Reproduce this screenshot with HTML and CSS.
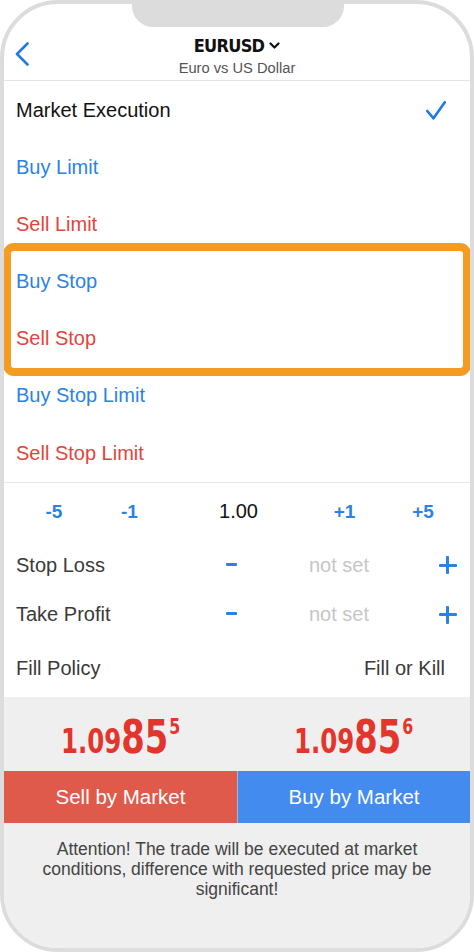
FILE: index.html
```html
<!DOCTYPE html>
<html lang="en">
<head>
<meta charset="utf-8">
<title>EURUSD order</title>
<link rel="stylesheet" href="styles.css">
</head>
<body>
<div class="phone">
  <div class="notch"></div>
  <header class="nav">
    <svg class="back" width="14" height="24" viewBox="0 0 14 24"><path d="M12.5 1.5 L2 12 L12.5 22.5" fill="none" stroke="#1f7ae6" stroke-width="2.6" stroke-linecap="round" stroke-linejoin="round"/></svg>
    <div class="heading">
      <div class="title">EURUSD<svg class="caret" width="11" height="8" viewBox="0 0 11 8"><path d="M1.5 1.5 L5.5 5.5 L9.5 1.5" fill="none" stroke="#111" stroke-width="2.2" stroke-linecap="round" stroke-linejoin="round"/></svg></div>
      <div class="subtitle">Euro vs US Dollar</div>
    </div>
  </header>

  <div class="types">
    <div class="type">Market Execution<svg class="check" width="20" height="19" viewBox="0 0 20 19"><path d="M1.3 10 L7.5 17.3 L18.8 1.3" fill="none" stroke="#1f7ae6" stroke-width="2.6" stroke-linecap="round" stroke-linejoin="round"/></svg></div>
    <div class="type buy">Buy Limit</div>
    <div class="type sell">Sell Limit</div>
    <div class="stops">
      <div class="type buy">Buy Stop</div>
      <div class="type sell">Sell Stop</div>
    </div>
    <div class="type buy">Buy Stop Limit</div>
    <div class="type sell">Sell Stop Limit</div>
  </div>

  <div class="params">
    <div class="volume">
      <span class="step">-5</span>
      <span class="step">-1</span>
      <span class="lots">1.00</span>
      <span class="step">+1</span>
      <span class="step step-last">+5</span>
    </div>
    <div class="param param-sl">
      <span class="label">Stop Loss</span>
      <span class="minus"></span>
      <span class="value">not set</span>
      <span class="plus"></span>
    </div>
    <div class="param">
      <span class="label">Take Profit</span>
      <span class="minus"></span>
      <span class="value">not set</span>
      <span class="plus"></span>
    </div>
    <div class="policy">
      <span class="label">Fill Policy</span>
      <span class="label">Fill or Kill</span>
    </div>
  </div>

  <div class="market">
    <div class="prices">
      <div class="price"><span class="quote"><span class="small">1.09</span><span class="big">85</span><sup class="pip">5</sup></span></div>
      <div class="price"><span class="quote"><span class="small">1.09</span><span class="big">85</span><sup class="pip">6</sup></span></div>
    </div>
    <div class="actions">
      <button class="btn btn-sell">Sell by Market</button>
      <button class="btn btn-buy">Buy by Market</button>
    </div>
    <p class="note">Attention! The trade will be executed at market conditions, difference with requested price may be significant!</p>
  </div>
</div>
</body>
</html>
```
FILE: styles.css
```css
html, body {
  margin: 0;
  padding: 0;
  background: #ffffff;
}

body {
  font-family: "Liberation Sans", Arial, sans-serif;
}

.phone {
  position: relative;
  width: 474px;
  height: 952px;
  box-sizing: border-box;
  border: 4px solid #dcdcdc;
  border-radius: 58px;
  overflow: hidden;
  background: #ffffff;
  display: flex;
  flex-direction: column;
}

.notch {
  position: absolute;
  top: -4px;
  left: 128px;
  width: 212px;
  height: 27px;
  background: #dcdcdc;
  border-radius: 0 0 21px 21px;
  z-index: 2;
}

/* header */
.nav {
  height: 76px;
  flex: none;
  border-bottom: 1px solid #e4e4e4;
  display: grid;
  grid-template-columns: 1fr auto 1fr;
  align-items: start;
}

.back {
  margin: 38px 0 0 11px;
}

.heading {
  padding-top: 31px;
  text-align: center;
}

.title {
  font-family: "Liberation Sans Narrow", "DejaVu Sans Condensed", sans-serif;
  font-weight: 700;
  font-size: 18px;
  letter-spacing: -0.7px;
  line-height: 22px;
  color: #111;
  display: flex;
  align-items: center;
  justify-content: center;
  gap: 5px;
}

.caret {
  margin-top: -1px;
}

.subtitle {
  margin-top: 3px;
  font-size: 14.7px;
  line-height: 17px;
  color: #555;
}

/* order types */
.types {
  flex: none;
  padding-top: 0.5px;
  border-bottom: 1px solid #e6e6e6;
}

.type {
  height: 57.17px;
  display: flex;
  align-items: center;
  justify-content: space-between;
  padding: 0 24px 0 12px;
  font-size: 20px;
  color: #111;
}

.type.buy { color: #2a83e4; }
.type.sell { color: #e2453b; }

.stops {
  position: relative;
}

.stops::after {
  content: "";
  position: absolute;
  top: -10px;
  bottom: -9px;
  left: -1px;
  right: -1px;
  border: 8px solid #f49b22;
  border-radius: 11px;
  pointer-events: none;
}

/* parameters */
.params {
  flex: none;
}

.volume {
  height: 58px;
  display: grid;
  grid-template-columns: 100px 51px 167px 45px 1fr;
  align-items: center;
  text-align: center;
}

.step {
  font-size: 19px;
  font-weight: 700;
  color: #2a83e4;
}

.step-last {
  padding-left: 9px;
}

.lots {
  font-size: 20px;
  color: #111;
}

.param {
  height: 50px;
  display: grid;
  grid-template-columns: 200px 31px 1fr 33px;
  align-items: center;
  padding: 0 6px 0 12px;
}

.param-sl {
  height: 49px;
}

.label {
  font-size: 20px;
  color: #3a3a3a;
}

.value {
  font-size: 20px;
  color: #c6c6c6;
  text-align: center;
}

.minus {
  justify-self: center;
  width: 11px;
  height: 3px;
  border-radius: 1px;
  background: #2a83e4;
  margin-top: -2px;
}

.plus {
  justify-self: center;
  position: relative;
  width: 18px;
  height: 18px;
}

.plus::before,
.plus::after {
  content: "";
  position: absolute;
  background: #2a83e4;
  border-radius: 1px;
}

.plus::before {
  left: 0;
  right: 0;
  top: 7.5px;
  height: 3px;
}

.plus::after {
  top: 0;
  bottom: 0;
  left: 7.5px;
  width: 3px;
}

.policy {
  height: 57px;
  display: flex;
  align-items: center;
  justify-content: space-between;
  padding: 0 25px 0 12px;
}

/* market block */
.market {
  flex: 1;
  background: #efefef;
}

.prices {
  height: 74px;
  display: grid;
  grid-template-columns: 1fr 1fr;
}

.price {
  padding-top: 17px;
  text-align: center;
  font-family: "Liberation Sans Narrow", "DejaVu Sans Condensed", sans-serif;
  font-weight: 700;
  color: #e2362d;
  line-height: 46px;
  white-space: nowrap;
}

.quote {
  display: inline-block;
  transform: scaleX(0.8);
}

.small {
  font-size: 34px;
}

.big {
  font-size: 47px;
}

.pip {
  font-size: 22px;
  line-height: 0;
  vertical-align: 19px;
  margin-left: 1px;
}

.actions {
  height: 52px;
  display: grid;
  grid-template-columns: 1fr 1fr;
}

.btn {
  border: 0;
  margin: 0;
  padding: 0;
  font-family: "Liberation Sans", Arial, sans-serif;
  font-size: 20.5px;
  color: #ffffff;
}

.btn-sell {
  background: #e05a4b;
}

.btn-buy {
  background: #438bee;
  border-left: 1px solid #9fb8d8;
}

.note {
  margin: 16px 0 0;
  padding: 0 30px;
  font-size: 17.5px;
  line-height: 20px;
  color: #444;
  text-align: center;
}
```
